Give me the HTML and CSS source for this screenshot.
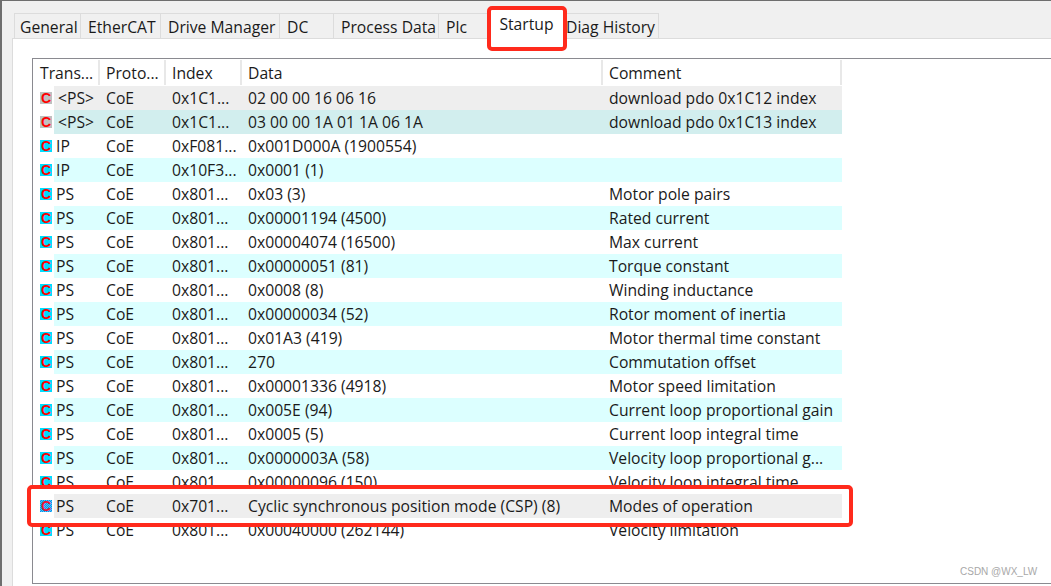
FILE: index.html
```html
<!DOCTYPE html>
<html lang="en">
<head>
<meta charset="utf-8">
<title>Startup</title>
<link rel="stylesheet" href="styles.css">
</head>
<body>
<div class="window">
  <nav class="tabs">
    <div class="tab">General</div>
    <div class="tab">EtherCAT</div>
    <div class="tab">Drive Manager</div>
    <div class="tab">DC</div>
    <div class="tab">Process Data</div>
    <div class="tab">Plc</div>
    <div class="tab tab-active"><span class="tab-label">Startup</span></div>
    <div class="tab tab-last">Diag History</div>
  </nav>
  <main class="panel">
    <section class="list">
      <div class="head">
        <div class="hcell">Trans...</div>
        <div class="hcell">Proto...</div>
        <div class="hcell">Index</div>
        <div class="hcell">Data</div>
        <div class="hcell">Comment</div>
      </div>
      <div class="row"><i class="ic ic-grey">C</i><div class="cells grey"><span class="tr-wide">&lt;PS&gt;</span><span>CoE</span><span>0x1C1...</span><span>02 00 00 16 06 16</span><span>download pdo 0x1C12 index</span></div></div>
      <div class="row"><i class="ic ic-grey">C</i><div class="cells teal"><span class="tr-wide">&lt;PS&gt;</span><span>CoE</span><span>0x1C1...</span><span>03 00 00 1A 01 1A 06 1A</span><span>download pdo 0x1C13 index</span></div></div>
      <div class="row"><i class="ic">C</i><div class="cells"><span>IP</span><span>CoE</span><span>0xF081...</span><span>0x001D000A (1900554)</span><span></span></div></div>
      <div class="row"><i class="ic">C</i><div class="cells cyan"><span>IP</span><span>CoE</span><span>0x10F3...</span><span>0x0001 (1)</span><span></span></div></div>
      <div class="row"><i class="ic">C</i><div class="cells"><span>PS</span><span>CoE</span><span>0x801...</span><span>0x03 (3)</span><span>Motor pole pairs</span></div></div>
      <div class="row"><i class="ic">C</i><div class="cells cyan"><span>PS</span><span>CoE</span><span>0x801...</span><span>0x00001194 (4500)</span><span>Rated current</span></div></div>
      <div class="row"><i class="ic">C</i><div class="cells"><span>PS</span><span>CoE</span><span>0x801...</span><span>0x00004074 (16500)</span><span>Max current</span></div></div>
      <div class="row"><i class="ic">C</i><div class="cells cyan"><span>PS</span><span>CoE</span><span>0x801...</span><span>0x00000051 (81)</span><span>Torque constant</span></div></div>
      <div class="row"><i class="ic">C</i><div class="cells"><span>PS</span><span>CoE</span><span>0x801...</span><span>0x0008 (8)</span><span>Winding inductance</span></div></div>
      <div class="row"><i class="ic">C</i><div class="cells cyan"><span>PS</span><span>CoE</span><span>0x801...</span><span>0x00000034 (52)</span><span>Rotor moment of inertia</span></div></div>
      <div class="row"><i class="ic">C</i><div class="cells"><span>PS</span><span>CoE</span><span>0x801...</span><span>0x01A3 (419)</span><span>Motor thermal time constant</span></div></div>
      <div class="row"><i class="ic">C</i><div class="cells cyan"><span>PS</span><span>CoE</span><span>0x801...</span><span>270</span><span>Commutation offset</span></div></div>
      <div class="row"><i class="ic">C</i><div class="cells"><span>PS</span><span>CoE</span><span>0x801...</span><span>0x00001336 (4918)</span><span>Motor speed limitation</span></div></div>
      <div class="row"><i class="ic">C</i><div class="cells cyan"><span>PS</span><span>CoE</span><span>0x801...</span><span>0x005E (94)</span><span>Current loop proportional gain</span></div></div>
      <div class="row"><i class="ic">C</i><div class="cells"><span>PS</span><span>CoE</span><span>0x801...</span><span>0x0005 (5)</span><span>Current loop integral time</span></div></div>
      <div class="row"><i class="ic">C</i><div class="cells cyan"><span>PS</span><span>CoE</span><span>0x801...</span><span>0x0000003A (58)</span><span>Velocity loop proportional g...</span></div></div>
      <div class="row"><i class="ic">C</i><div class="cells"><span>PS</span><span>CoE</span><span>0x801...</span><span>0x00000096 (150)</span><span>Velocity loop integral time</span></div></div>
      <div class="row row-marked"><i class="ic ic-selected">C</i><div class="cells grey"><span>PS</span><span>CoE</span><span>0x701...</span><span>Cyclic synchronous position mode (CSP) (8)</span><span>Modes of operation</span></div></div>
      <div class="row"><i class="ic">C</i><div class="cells"><span>PS</span><span>CoE</span><span>0x801...</span><span>0x00040000 (262144)</span><span>Velocity limitation</span></div></div>
    </section>
  </main>
  <div class="watermark">CSDN @WX_LW</div>
</div>
</body>
</html>
```
FILE: styles.css
```css
*, *::before { box-sizing: border-box; }
html, body { margin: 0; height: 100%; overflow: hidden; }
body { font-family: "Open Sans", "Noto Sans", sans-serif; font-size: 15.7px; color: #1a1a1a; background: #f0f0f0; }
.window { position: relative; height: 586px; border-top: 1px solid #6e6e6e; border-left: 2px solid #6e6e6e; padding: 12px 0 0 10px; display: flex; flex-direction: column; }
.tabs { display: grid; grid-template-columns: 67px 80px 119px 54px 105px 49px 75px 96px; height: 25px; margin-left: 2px; flex: none; justify-content: start; }
.tab { height: 25px; line-height: 26px; padding-left: 7px; background: #f0f0f0; border: 1px solid #dcdcdc; border-width: 1px 1px 0 0; white-space: nowrap; }
.tab:first-child { border-left-width: 1px; padding-left: 5px; }
.tab-last { padding-left: 3px; }
.tab-active { position: relative; z-index: 2; border: 0; text-align: center; padding: 0 0 0 2px; }
.tab-active::before { content: ""; position: absolute; left: -1px; right: -4px; top: -7px; bottom: -13px; background: #fff; border: 4px solid #ff2a1c; border-radius: 5px; }
.tab-label { position: relative; top: -2px; }
.panel { flex: 1; min-height: 0; background: #fff; border-top: 1px solid #dcdcdc; border-left: 1px solid #dcdcdc; padding: 19px 0 2px 19px; }
.list { height: 100%; border: 1px solid #8a8a90; border-right: 0; }
.head { display: grid; grid-template-columns: 66px 66px 76px 361px 239px; height: 27px; padding-left: 1px; }
.hcell { height: 25px; margin-top: 1px; line-height: 27px; padding-left: 6px; border-right: 2px solid #e8e8e8; white-space: nowrap; overflow: hidden; }
.row { display: flex; height: 24px; line-height: 25px; white-space: nowrap; }
.ic { flex: none; width: 12px; height: 12px; margin: 6px 2px 0 7px; background: #00dcff; color: #ff0000; font: bold 14px/12px "Liberation Sans", sans-serif; text-align: center; }
.ic-grey { background: #c0c0c0; }
.ic-selected { background: #20b8f8 repeating-conic-gradient(#1f7fe8 0 25%, #38d8ff 0 50%) 0 0 / 2px 2px; color: #ee1133; }
.cells { width: 788px; display: grid; grid-template-columns: 46px 66px 76px 361px 239px; }
.cells span { display: block; }
.cells span:first-child { padding-left: 2px; }
.cells span:nth-child(n+2) { padding-left: 6px; }
.cells span.tr-wide { padding-left: 4px; }
.cyan { background: #dcffff; }
.grey { background: #eeeeee; }
.teal { background: #d2eeee; }
.row-marked { position: relative; z-index: 1; }
.row-marked::before { content: ""; position: absolute; z-index: -1; left: -6px; width: 826px; top: -9px; bottom: -9px; background: #fff; border: 4px solid #ff2a1c; border-radius: 5px; }
.watermark { position: absolute; left: 958px; top: 565px; font: 10px "Liberation Sans", sans-serif; color: #a8a8a8; }
```
